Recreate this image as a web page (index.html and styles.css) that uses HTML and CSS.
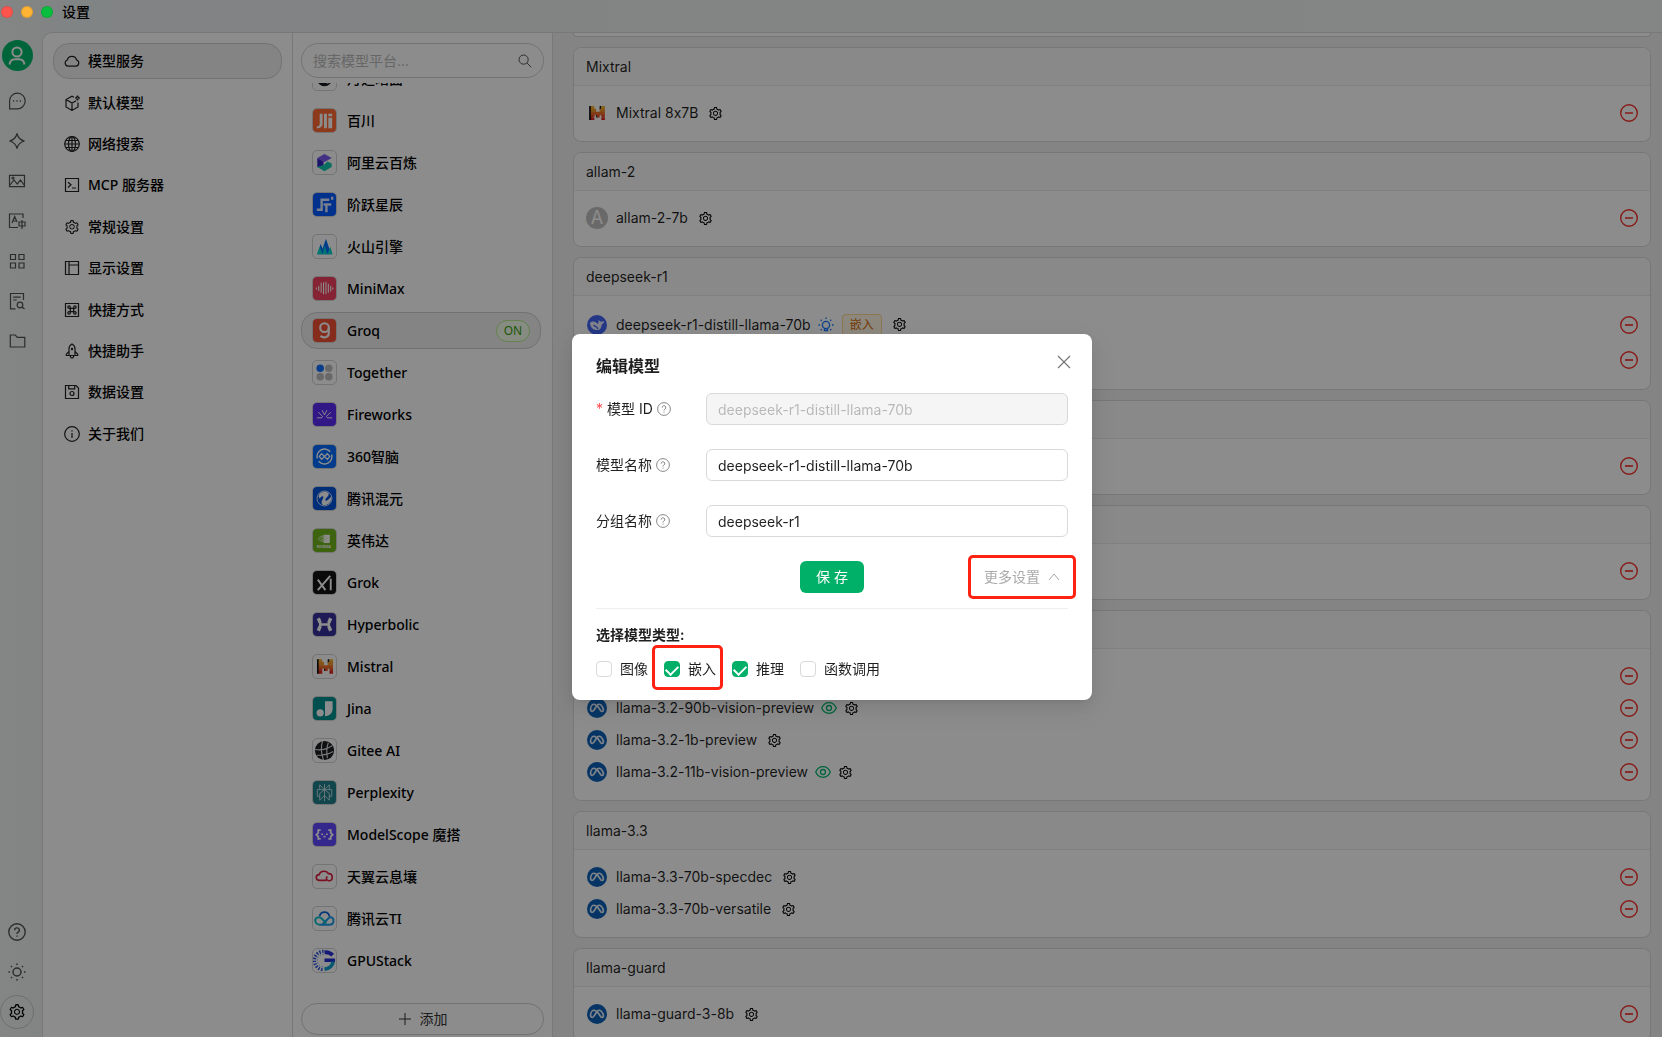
FILE: index.html
```html
<!DOCTYPE html>
<html lang="zh-CN">
<head>
    <meta charset="UTF-8">
    <meta name="viewport" content="width=device-width, initial-scale=1.0">
    <title>设置</title>
    <link rel="stylesheet" href="styles.css">
</head>
<body>
    <svg class="sprite" aria-hidden="true">
        <symbol id="i-gear" viewBox="0 0 1024 1024"><path fill="currentColor" stroke="none" d="M924.8 625.7l-65.5-56c3.1-19 4.7-38.4 4.7-57.8s-1.6-38.8-4.7-57.8l65.5-56a32.03 32.03 0 009.3-35.2l-.9-2.6a443.74 443.74 0 00-79.7-137.9l-1.8-2.1a32.12 32.12 0 00-35.1-9.5l-81.3 28.9c-30-24.6-63.5-44-99.7-57.6l-15.7-85a32.05 32.05 0 00-25.8-25.7l-2.7-.5c-52.1-9.4-106.9-9.4-159 0l-2.7.5a32.05 32.05 0 00-25.8 25.7l-15.8 85.4a351.86 351.86 0 00-99 57.4l-81.9-29.1a32 32 0 00-35.1 9.5l-1.8 2.1a446.02 446.02 0 00-79.7 137.9l-.9 2.6c-4.5 12.5-.8 26.5 9.3 35.2l66.3 56.6c-3.1 18.8-4.6 38-4.6 57.1 0 19.2 1.5 38.4 4.6 57.1L99 625.5a32.03 32.03 0 00-9.3 35.2l.9 2.6c18.1 50.4 44.9 96.9 79.7 137.9l1.8 2.1a32.12 32.12 0 0035.1 9.5l81.9-29.1c29.8 24.5 63.1 43.9 99 57.4l15.8 85.4a32.05 32.05 0 0025.8 25.7l2.7.5a449.4 449.4 0 00159 0l2.7-.5a32.05 32.05 0 0025.8-25.7l15.7-85a350 350 0 0099.7-57.6l81.3 28.9a32 32 0 0035.1-9.5l1.8-2.1c34.8-41.1 61.6-87.5 79.7-137.9l.9-2.6c4.5-12.3.8-26.3-9.3-35zM788.3 465.9c2.5 15.1 3.8 30.6 3.8 46.1s-1.3 31-3.8 46.1l-6.6 40.1 74.7 63.9a370.03 370.03 0 01-42.6 73.6L721 702.8l-31.4 25.8c-23.9 19.6-50.5 35-79.3 45.8l-38.1 14.3-17.9 97a377.5 377.5 0 01-85 0l-17.9-97.2-37.8-14.5c-28.5-10.8-55-26.2-78.7-45.7l-31.4-25.9-93.4 33.2c-17-22.9-31.2-47.6-42.6-73.6l75.5-64.5-6.5-40c-2.4-14.9-3.7-30.3-3.7-45.5 0-15.3 1.2-30.6 3.7-45.5l6.5-40-75.5-64.5c11.3-26.1 25.6-50.7 42.6-73.6l93.4 33.2 31.4-25.9c23.7-19.5 50.2-34.9 78.7-45.7l37.9-14.3 17.9-97.2c28.1-3.2 56.8-3.2 85 0l17.9 97 38.1 14.3c28.7 10.8 55.4 26.2 79.3 45.8l31.4 25.8 92.8-32.9c17 22.9 31.2 47.6 42.6 73.6L781.8 426l6.5 39.9zM512 326c-97.2 0-176 78.8-176 176s78.8 176 176 176 176-78.8 176-176-78.8-176-176-176zm79.2 255.2A111.6 111.6 0 01512 614c-29.9 0-58-11.7-79.2-32.8A111.6 111.6 0 01400 502c0-29.9 11.7-58 32.8-79.2C454 401.6 482.1 390 512 390c29.9 0 58 11.6 79.2 32.8A111.6 111.6 0 01624 502c0 29.9-11.7 58-32.8 79.2z"/></symbol>
        <symbol id="i-minus" viewBox="0 0 18 18"><circle cx="9" cy="9" r="8.3" stroke-width="1.4"/><path d="M5 9h8" stroke-width="1.7"/></symbol>
        <symbol id="i-help" viewBox="0 0 16 16"><circle cx="8" cy="8" r="7.3"/><path d="M5.9 6.5a2.1 2 0 1 1 3.1 1.6c-.7.4-1 .8-1 1.6M8 11v1.2"/></symbol>
        <symbol id="i-eye" viewBox="0 0 16 16"><path d="M.7 8C2.300 4.400 4.800 2.700 8 2.700S13.700 4.400 15.300 8c-1.600 3.600-4.100 5.300-7.300 5.300S2.300 11.600.7 8z"/><circle cx="8" cy="8" r="2.500"/></symbol>
        <symbol id="l-meta" viewBox="0 0 20 20"><circle cx="10" cy="10" r="10" fill="#0b62b9" stroke="none"/><path d="M10 8.200C8.800 6.700 7.600 6 6.500 6.300 4.800 6.800 3.500 9.400 3.600 11.600c.1 1.800 1.800 2.300 3 .9C7.900 11 9 8.600 10.300 7.200c1.300-1.300 3-1.300 4.200.3 1.200 1.500 2 3.400 1.900 4.700-.2 1.700-1.800 1.700-2.900.2C12.500 11 11.300 8.800 10 7.600" stroke="#e6eef8" stroke-width="1.700"/></symbol>
        <symbol id="l-mistral" viewBox="0 0 18 16"><g stroke="none"><path fill="#111" d="M0 0h3v16H0zM12 0h2v4h-2zM8 10h2v3H8z"/><path fill="#f2b02c" d="M2 0h4v4H2zM14 0h4v4h-4z"/><path fill="#f2952b" d="M2 3h6v4H2zM12 3h6v4h-6z"/><path fill="#ee722a" d="M2 6.500h16v4H2z"/><path fill="#e84a28" d="M2 10h4v3H2zM9 10h3v3H9zM14 10h4v3h-4z"/><path fill="#df2622" d="M2 13h4v3H2zM14 13h4v3h-4z"/></g></symbol>
    </svg>

    <header class="titlebar">
        <div class="lights"><i class="red"></i><i class="yellow"></i><i class="green"></i></div>
        <span class="title">设置</span>
    </header>

    <div class="app">
        <nav class="rail">
            <button class="avatar" aria-label="用户"><svg class="icon-20" viewBox="0 0 20 20"><circle cx="10" cy="6" r="4.600"/><path d="M2.500 18.500c.5-3.600 3-5.200 5.500-5.200h4c2.500 0 5 1.600 5.500 5.200"/></svg></button>
            <button class="rail-btn" aria-label="对话"><svg class="icon-18" viewBox="0 0 18 18"><path d="M1.600 16.800V9A7.800 7.800 0 1 1 9 16.800z"/><path d="M5 9h1.200M8.400 9h1.200M11.800 9H13" stroke-width="1.500"/></svg></button>
            <button class="rail-btn" aria-label="助手"><svg class="icon-18" viewBox="0 0 18 18"><path d="M9 1.500c.9 3.900 3.100 6.500 7.500 7.500-4.400 1-6.600 3.600-7.500 7.500C8.100 12.600 5.900 10 1.500 9 5.900 8 8.100 5.400 9 1.500z"/></svg></button>
            <button class="rail-btn" aria-label="绘图"><svg class="icon-18" viewBox="0 0 18 18"><path d="M1.500 3.300h15v11.400h-15zM2 13l4-5 3.200 4 3.300-4L16 12.800"/><circle cx="5" cy="6" r="1"/></svg></button>
            <button class="rail-btn" aria-label="翻译"><svg class="icon-18" viewBox="0 0 18 18"><path d="M15 6V2H1.500v13.500H10M4 11l2.700-6.500L9 10M5 9h3.500M14 8v9M11 10h6v4h-6z"/></svg></button>
            <button class="rail-btn" aria-label="小程序"><svg class="icon-18" viewBox="0 0 18 18"><path d="M2.500 2.500h5v5h-5zM11 2.500h5v5h-5zM2.500 11h5v5h-5zM11 11h5v5h-5z"/></svg></button>
            <button class="rail-btn" aria-label="知识库"><svg class="icon-18" viewBox="0 0 18 18"><path d="M7.500 16.800h-5V1.500h13V8M5.200 5.200h7.500M5.200 8h3.500"/><circle cx="12" cy="13" r="2.800"/><path d="M14 15l2.500 2"/></svg></button>
            <button class="rail-btn" aria-label="文件"><svg class="icon-18" viewBox="0 0 18 18"><path d="M2.300 15V3h5l2 2.300h7.500V15z"/></svg></button>
            <div class="rail-space"></div>
            <button class="rail-btn" aria-label="帮助"><svg class="icon-18"><use href="#i-help"/></svg></button>
            <button class="rail-btn" aria-label="主题"><svg class="icon-18" viewBox="0 0 18 18"><circle cx="9" cy="9" r="4" stroke-width="1.500"/><path d="M9 .5v1.500M9 16v1.500M.5 9H2M16 9h1.500M3 3l1 1M14 14l1 1M3 15l1-1M14 4l1-1" stroke-width="1.500"/></svg></button>
            <button class="rail-btn active" aria-label="设置"><svg class="icon-18"><use href="#i-gear"/></svg></button>
        </nav>

        <div class="content">
            <div class="menu-col">
                <nav class="menu">
                    <a class="menu-item active" href="#"><svg class="icon-16" viewBox="0 0 16 16"><path d="M4 13.200a3.200 3.200 0 0 1-.7-6.200 4.800 4.800 0 0 1 9.300 0A3.200 3.200 0 0 1 12 13.200z"/></svg>模型服务</a>
                    <a class="menu-item" href="#"><svg class="icon-16" viewBox="0 0 16 16"><path d="M14 7.500V12l-6 3.400L2 12V4.500L8 1.200l2 1M2 4.600L8 8l4.200-2.300M8 8v7.200M13.500.5c.2 1.600.7 2.200 2.200 2.500-1.500.3-2 .9-2.200 2.500-.2-1.600-.7-2.200-2.200-2.500 1.500-.3 2-.9 2.200-2.500z"/></svg>默认模型</a>
                    <a class="menu-item" href="#"><svg class="icon-16" viewBox="0 0 16 16"><circle cx="8" cy="8" r="7.300"/><ellipse cx="8" cy="8" rx="3.500" ry="7.300"/><path d="M8 .7v14.600M.7 8h14.600M2 4.500h12M2 11.500h12"/></svg>网络搜索</a>
                    <a class="menu-item" href="#"><svg class="icon-16" viewBox="0 0 16 16"><path d="M1.500 1.500h13v13h-13zM4 5.200l3 2.600-3 2.700M8 11h4"/></svg>MCP 服务器</a>
                    <a class="menu-item" href="#"><svg class="icon-16"><use href="#i-gear"/></svg>常规设置</a>
                    <a class="menu-item" href="#"><svg class="icon-16" viewBox="0 0 16 16"><path d="M1.500 1.500h13v13h-13zM5 1.500v13M5 5h9.500"/></svg>显示设置</a>
                    <a class="menu-item" href="#"><svg class="icon-16" viewBox="0 0 16 16"><path d="M1.500 1.500h13v13h-13zM6.300 6.300h3.400v3.400H6.300zM6.300 6.300V5.200a1.200 1.200 0 1 0-1.100 1.100zM9.700 6.300V5.200a1.200 1.200 0 1 1 1.100 1.100zM6.300 9.700v1.100a1.200 1.200 0 1 1-1.100-1.100zM9.700 9.700v1.100a1.200 1.200 0 1 0 1.100-1.100z"/></svg>快捷方式</a>
                    <a class="menu-item" href="#"><svg class="icon-16" viewBox="0 0 16 16"><path d="M5 12.500V5.500C5 3.500 6.500 1.800 8 1c1.500.8 3 2.500 3 4.500v7zM5 8.500l-2.700 2.700v1.300h11.400v-1.300L11 8.500M6.300 12.500c0 1.500.6 2.500 1.700 2.500s1.700-1 1.700-2.500"/><circle cx="8" cy="6" r=".6"/></svg>快捷助手</a>
                    <a class="menu-item" href="#"><svg class="icon-16" viewBox="0 0 16 16"><path d="M1.500 1.500H12L14.500 4v10.500h-13zM4.700 1.500v3.300h6V1.500"/><circle cx="8" cy="9.500" r="2"/></svg>数据设置</a>
                    <a class="menu-item" href="#"><svg class="icon-16" viewBox="0 0 16 16"><circle cx="8" cy="8" r="7.300"/><path d="M8 7v5M8 4.200v1.300"/></svg>关于我们</a>
                </nav>
            </div>

            <section class="providers">
                <div class="search">
                    <input type="text" placeholder="搜索模型平台..." aria-label="搜索模型平台">
                    <svg class="icon-14" viewBox="0 0 14 14"><circle cx="5.600" cy="5.600" r="4.600"/><path d="M9 9l4.300 4.300"/></svg>
                </div>
                <div class="provider-scroll">
                    <ul class="provider-list">
                        <li class="provider"><svg class="logo" viewBox="0 0 24 24"><circle cx="12" cy="12" r="8" fill="#16191e"/><path d="M5 9l13 5M5 13l11 4M8 6l11 4" stroke="#fff"/></svg>月之暗面</li>
                        <li class="provider"><svg class="logo" viewBox="0 0 24 24"><path fill="#ff6933" d="M0 0h24v24H0z"/><path fill="#fff" d="M7 5h3v10c0 3-2 5-6 5v-2c2 0 3-1 3-3zM11.500 5h3v15h-3zM16 9h4v11h-4zM16 5h4v2.500h-4z"/></svg>百川</li>
                        <li class="provider"><svg class="logo" viewBox="0 0 24 24"><path fill="#7a5bf0" d="M12 3l7.500 4.300L12 11.500 4.500 7.300z"/><path fill="#3423c4" d="M4.500 7.300L11 11v4l-6.500 2z"/><path fill="#12c9b0" d="M4.500 16.700L12 14l3-3 4.500 2v3.700L12 21z"/></svg>阿里云百炼</li>
                        <li class="provider"><svg class="logo" viewBox="0 0 24 24"><path fill="#005aff" d="M0 0h24v24H0z"/><path d="M4 17.500h5V7h8M11 12h8M14 12v8M20 4v3" stroke="#dce8ff" stroke-width="2.500"/></svg>阶跃星辰</li>
                        <li class="provider"><svg class="logo" viewBox="0 0 24 24"><path fill="#006eff" d="M8 20l5.500-16L19 20zM5 20l3-11 4 11z"/><path fill="#00d6cf" d="M4 20l3-8 3 8zM10 20l2-9 3 9zM15 20l3-8 2.500 8z"/></svg>火山引擎</li>
                        <li class="provider"><svg class="logo" viewBox="0 0 24 24"><path fill="#f23f5d" d="M0 0h24v24H0z"/><path d="M3.500 13v-2M6 14.500v-5M8.500 16.500V6M11 18V5.500M13.500 18V5M16 16.500V7M18.500 15V9M20.700 13v-2" stroke="#fff" stroke-width="1.100"/></svg>MiniMax</li>
                        <li class="provider active"><svg class="logo" viewBox="0 0 24 24"><path fill="#f55036" d="M0 0h24v24H0z"/><circle cx="12" cy="9" r="4.500" stroke="#fff" stroke-width="2.200"/><path d="M16.500 9v5.500c0 5-6 6-8.700 3" stroke="#fff" stroke-width="2.200"/></svg>Groq<span class="on">ON</span></li>
                        <li class="provider"><svg class="logo" viewBox="0 0 24 24"><circle cx="7.500" cy="7.500" r="3.900" fill="#0f6fff"/><g fill="#bdbdbd"><circle cx="16.500" cy="7.500" r="3.900"/><circle cx="7.500" cy="16.500" r="3.900"/><circle cx="16.500" cy="16.500" r="3.900"/></g></svg>Together</li>
                        <li class="provider"><svg class="logo" viewBox="0 0 24 24"><path fill="#5b2af5" d="M0 0h24v24H0z"/><path d="M9.500 7.500l2.500 5 2.500-5M5.500 9.500l4.500 4.500M18.500 9.500L14 14M4 15.500h5l1-1.500M20 15.500h-5L14 14" stroke="#fff"/></svg>Fireworks</li>
                        <li class="provider"><svg class="logo" viewBox="0 0 24 24"><path fill="#006cff" d="M0 0h24v24H0z"/><path d="M4.500 14A7.800 7.800 0 0 1 18 7M19.500 10A7.800 7.800 0 0 1 6 17" stroke="#fff" stroke-width="1.600"/><path d="M9 9l6 6M9 15l6-6M6.500 12L9 9l3 3 3-3 2.500 3-2.500 3-3-3-3 3z" stroke="#fff" stroke-width="1.300"/></svg>360智脑</li>
                        <li class="provider"><svg class="logo" viewBox="0 0 24 24"><path fill="#0052d9" d="M0 0h24v24H0z"/><circle cx="12" cy="12" r="7.800" stroke="#d6e4ff"/><path fill="#fff" d="M13 5c-5-1-9 4-6 7 3-4 5-2 3 1-2 3-1 6 2 6 5 0 8-5 7-9-3 3-4 5-6 4-1-3 5-4 3-8z"/></svg>腾讯混元</li>
                        <li class="provider"><svg class="logo" viewBox="0 0 24 24"><path fill="#6fb51b" d="M0 0h24v24H0z"/><path fill="#fff" d="M11 6h6.500v8.500H11z"/><path d="M5.500 10C8 6.500 13 6.500 15 9.500c-2 4-7.500 4.500-9.500.5zM8 10c1.500-2 4-2 5 0-1.500 2-3.500 2-5 0z" stroke="#ddefc6"/><text x="4" y="20" class="nv">NVIDIA</text></svg>英伟达</li>
                        <li class="provider"><svg class="logo" viewBox="0 0 24 24"><path fill="#131313" d="M0 0h24v24H0z"/><path d="M5 9l8 11M5 20L18 5M18.500 8v12" stroke="#fff" stroke-width="2"/></svg>Grok</li>
                        <li class="provider"><svg class="logo" viewBox="0 0 24 24"><path fill="#36309c" d="M0 0h24v24H0z"/><path d="M7.500 9.500v5M16.500 9.500v5M7 12h10" stroke="#fff" stroke-width="2.600"/><path d="M7.500 10L5.500 5.500M16.500 10l2-4.500M7.500 14l-2 4.500M16.500 14l2 4.500" stroke="#fff" stroke-width="3.600"/></svg>Hyperbolic</li>
                        <li class="provider"><svg class="logo" viewBox="0 0 24 24"><use href="#l-mistral" x="4" y="4" width="17" height="16"/></svg>Mistral</li>
                        <li class="provider"><svg class="logo" viewBox="0 0 24 24"><path fill="#009191" d="M0 0h24v24H0z"/><circle cx="7.500" cy="16.500" r="3.800" fill="#fff"/><path fill="#fff" d="M12.500 4.500h8v8c0 4-3.500 7.500-8 7.500z"/></svg>Jina</li>
                        <li class="provider"><svg class="logo" viewBox="0 0 24 24"><circle cx="12" cy="12" r="10" fill="#1c1e21"/><path d="M10 2c-2 6-2 12 1 20M16 4c-2 5-2 10-1 16M2 11c6 1 12 0 18-4M4 17c6 0 12-1 17-4" stroke="#ddd" stroke-width="1.200"/></svg>Gitee AI</li>
                        <li class="provider"><svg class="logo" viewBox="0 0 24 24"><path fill="#20808d" d="M0 0h24v24H0z"/><path d="M12 3v18M7 4l5 5 5-5v5H7zM7 9H4.500v7H7v4l5-5 5 5v-4h2.500V9H17M7 16v-3l5-4 5 4v3" stroke="#cfe6e8" stroke-width=".9"/></svg>Perplexity</li>
                        <li class="provider"><svg class="logo" viewBox="0 0 24 24"><path fill="#624aff" d="M0 0h24v24H0z"/><path d="M8 7.500H5.500v2.700l-2 2 2 2v2.300H8M16 7.500h2.500v2.700l2 2-2 2v2.300H16M9.500 11v1.500M14.500 11v1.500M11 14.200h2" stroke="#fff" stroke-width="1.900"/></svg>ModelScope 魔搭</li>
                        <li class="provider"><svg class="logo" viewBox="0 0 24 24"><path d="M14 16H7c-5 0-4.500-6-.5-6 1-4.500 8-4.500 9.500-1 5-.5 5.500 7 1 7.500-3 0-4-3-2-4.500" stroke="#dc1f3f" stroke-width="1.700"/></svg>天翼云息壤</li>
                        <li class="provider"><svg class="logo" viewBox="0 0 24 24"><path d="M7 9.500C8 4 16 4 17 9.500" stroke="#0a66e0" stroke-width="2"/><path d="M10 18l7.500-7.500c5.500.5 5 8-.5 8H7" stroke="#1e9bea" stroke-width="2"/><path d="M14 17L9 12c-3-3-7.500-.5-6.500 3 .6 2.500 2.500 3.500 5 3.500" stroke="#0bbfd0" stroke-width="2"/></svg>腾讯云TI</li>
                        <li class="provider"><svg class="logo" viewBox="0 0 24 24"><path d="M12 3.500c4-.5 6.500 1 8.500 3" stroke="#2630d8" stroke-width="4"/><path fill="#2230d8" d="M12 10h11v3.500H12z"/><path d="M21 13c-.5 4-4 7.500-9 8" stroke="#0fa0d0" stroke-width="4"/><path d="M11 2.500A9.500 9.500 0 0 0 11 21.500" stroke="#2a50dd" stroke-width="3.500" stroke-dasharray="1.500 1.500"/><path d="M11 5.500a6.500 6.500 0 0 0 0 13" stroke="#3b7be6" stroke-dasharray="1 2"/></svg>GPUStack</li>
                    </ul>
                </div>
                <button class="add"><svg class="icon-14" viewBox="0 0 14 14"><path d="M7 1v12M1 7h12"/></svg>添加</button>
            </section>

            <main class="models">
                <div class="group group-tail"></div>
                <section class="group">
                    <h2>Mixtral</h2>
                    <div class="rows">
                        <div class="row"><span class="pic"><svg class="mistral"><use href="#l-mistral"/></svg></span><span class="name">Mixtral 8x7B</span><button class="gear" aria-label="编辑"><svg><use href="#i-gear"/></svg></button><button class="del" aria-label="删除"><svg><use href="#i-minus"/></svg></button></div>
                    </div>
                </section>
                <section class="group">
                    <h2>allam-2</h2>
                    <div class="rows">
                        <div class="row"><span class="pic letter">A</span><span class="name">allam-2-7b</span><button class="gear" aria-label="编辑"><svg><use href="#i-gear"/></svg></button><button class="del" aria-label="删除"><svg><use href="#i-minus"/></svg></button></div>
                    </div>
                </section>
                <section class="group">
                    <h2>deepseek-r1</h2>
                    <div class="rows">
                        <div class="row tall"><span class="pic"><svg class="icon-20" viewBox="0 0 20 20"><circle cx="10" cy="10" r="10" fill="#4165f5"/><path fill="#e8edff" d="M3 8c1-1.500 4-2 6-.5l2 1.500c.5-1.500 1-3 .5-4 1 .5 1.500 1 2 1.500 1 .5 2 0 3.500-.5-.2 2-1 3-2.300 3.500-.2 2.500-1 4.500-2.700 5.500H9c-3.500-.5-6-3.500-6-7z"/><path d="M6.500 10.500c1 0 3.500 1.500 4.500 3.500" stroke="#4165f5" stroke-width="1.500"/></svg></span><span class="name">deepseek-r1-distill-llama-70b</span><svg class="cap sun" viewBox="0 0 16 16"><circle cx="8" cy="8" r="3.600"/><path d="M6.500 11.500v2h3v-2M8 .5V2M.5 8H2M14 8h1.500M2.700 2.700l1.100 1.100M12.200 3.800l1.100-1.100M2.700 13.300l1.100-1.100M12.200 12.200l1.100 1.100"/></svg><span class="tag">嵌入</span><button class="gear" aria-label="编辑"><svg><use href="#i-gear"/></svg></button><button class="del" aria-label="删除"><svg><use href="#i-minus"/></svg></button></div>
                        <div class="row tall"><button class="del" aria-label="删除"><svg><use href="#i-minus"/></svg></button></div>
                    </div>
                </section>
                <section class="group">
                    <h2></h2>
                    <div class="rows">
                        <div class="row"><button class="del" aria-label="删除"><svg><use href="#i-minus"/></svg></button></div>
                    </div>
                </section>
                <section class="group">
                    <h2></h2>
                    <div class="rows">
                        <div class="row"><button class="del" aria-label="删除"><svg><use href="#i-minus"/></svg></button></div>
                    </div>
                </section>
                <section class="group">
                    <h2></h2>
                    <div class="rows">
                        <div class="row"><button class="del" aria-label="删除"><svg><use href="#i-minus"/></svg></button></div>
                        <div class="row"><span class="pic"><svg class="icon-20"><use href="#l-meta"/></svg></span><span class="name">llama-3.2-90b-vision-preview</span><svg class="cap vision"><use href="#i-eye"/></svg><button class="gear" aria-label="编辑"><svg><use href="#i-gear"/></svg></button><button class="del" aria-label="删除"><svg><use href="#i-minus"/></svg></button></div>
                        <div class="row"><span class="pic"><svg class="icon-20"><use href="#l-meta"/></svg></span><span class="name">llama-3.2-1b-preview</span><button class="gear" aria-label="编辑"><svg><use href="#i-gear"/></svg></button><button class="del" aria-label="删除"><svg><use href="#i-minus"/></svg></button></div>
                        <div class="row"><span class="pic"><svg class="icon-20"><use href="#l-meta"/></svg></span><span class="name">llama-3.2-11b-vision-preview</span><svg class="cap vision"><use href="#i-eye"/></svg><button class="gear" aria-label="编辑"><svg><use href="#i-gear"/></svg></button><button class="del" aria-label="删除"><svg><use href="#i-minus"/></svg></button></div>
                    </div>
                </section>
                <section class="group">
                    <h2>llama-3.3</h2>
                    <div class="rows">
                        <div class="row"><span class="pic"><svg class="icon-20"><use href="#l-meta"/></svg></span><span class="name">llama-3.3-70b-specdec</span><button class="gear" aria-label="编辑"><svg><use href="#i-gear"/></svg></button><button class="del" aria-label="删除"><svg><use href="#i-minus"/></svg></button></div>
                        <div class="row"><span class="pic"><svg class="icon-20"><use href="#l-meta"/></svg></span><span class="name">llama-3.3-70b-versatile</span><button class="gear" aria-label="编辑"><svg><use href="#i-gear"/></svg></button><button class="del" aria-label="删除"><svg><use href="#i-minus"/></svg></button></div>
                    </div>
                </section>
                <section class="group">
                    <h2>llama-guard</h2>
                    <div class="rows">
                        <div class="row"><span class="pic"><svg class="icon-20"><use href="#l-meta"/></svg></span><span class="name">llama-guard-3-8b</span><button class="gear" aria-label="编辑"><svg><use href="#i-gear"/></svg></button><button class="del" aria-label="删除"><svg><use href="#i-minus"/></svg></button></div>
                    </div>
                </section>
            </main>
        </div>
    </div>

    <div class="mask">
        <form class="dialog" role="dialog" aria-labelledby="dialog-title">
            <div class="dialog-head">
                <h1 id="dialog-title">编辑模型</h1>
                <button type="button" class="close" aria-label="关闭"><svg class="icon-14" viewBox="0 0 14 14"><path d="M1 1l12 12M13 1L1 13"/></svg></button>
            </div>
            <div class="field">
                <label for="model-id"><span class="required">*</span>模型 ID<svg class="icon-14"><use href="#i-help"/></svg></label>
                <input id="model-id" type="text" value="deepseek-r1-distill-llama-70b" disabled>
            </div>
            <div class="field">
                <label for="model-name">模型名称<svg class="icon-14"><use href="#i-help"/></svg></label>
                <input id="model-name" type="text" value="deepseek-r1-distill-llama-70b">
            </div>
            <div class="field">
                <label for="model-group">分组名称<svg class="icon-14"><use href="#i-help"/></svg></label>
                <input id="model-group" type="text" value="deepseek-r1">
            </div>
            <div class="actions">
                <button type="button" class="save">保 存</button>
                <button type="button" class="more">更多设置<svg viewBox="0 0 12 12"><path d="M1 9l5-6 5 6"/></svg></button>
            </div>
            <h3>选择模型类型:</h3>
            <div class="types">
                <label><input type="checkbox"><span>图像</span></label>
                <label class="marked"><input type="checkbox" checked><span>嵌入</span></label>
                <label><input type="checkbox" checked><span>推理</span></label>
                <label><input type="checkbox"><span>函数调用</span></label>
            </div>
        </form>
    </div>
</body>
</html>
```
FILE: styles.css
```css
* {
    box-sizing: border-box;
}
body {
    margin: 0;
    height: 100vh;
    display: flex;
    flex-direction: column;
    overflow: hidden;
    background: linear-gradient(90deg, #eff4f2, #ecf0f1 60px, #f0f3f2);
    font-family: Inter, "Noto Sans CJK SC", sans-serif;
    font-size: 14px;
    line-height: 22px;
    font-variant-ligatures: no-contextual;
    color: rgba(0, 0, 0, 0.88);
}
button {
    padding: 0;
    border: none;
    background: none;
    font: inherit;
    color: inherit;
    display: flex;
    align-items: center;
    justify-content: center;
}
input {
    font: inherit;
    color: inherit;
}
svg {
    flex-shrink: 0;
    fill: none;
    stroke: currentColor;
}
.sprite {
    position: absolute;
    width: 0;
    height: 0;
}
.icon-14 {
    width: 14px;
    height: 14px;
}
.icon-16 {
    width: 16px;
    height: 16px;
}
.icon-18 {
    width: 18px;
    height: 18px;
}
.icon-20 {
    width: 20px;
    height: 20px;
}

/* title bar */
.titlebar {
    height: 32px;
    padding-bottom: 8px;
    display: flex;
    align-items: center;
    flex-shrink: 0;
}
.lights {
    position: relative;
    z-index: 20;
    display: flex;
    gap: 8px;
    padding-left: 1px;
    margin-right: 9px;
}
.lights i {
    width: 12px;
    height: 12px;
    border-radius: 50%;
    border: 1px solid rgba(0, 0, 0, 0.1);
}
.red {
    background: #ff544d;
}
.yellow {
    background: #ffb433;
}
.green {
    background: #09be3e;
}
.title {
    font-weight: 500;
    color: #000;
}

/* left icon rail */
.app {
    flex: 1;
    min-height: 0;
    display: flex;
}
.rail {
    width: 42px;
    padding: 8px 8px 8px 0;
    display: flex;
    flex-direction: column;
    align-items: center;
    gap: 6px;
    color: #505050;
}
.avatar {
    width: 31px;
    height: 31px;
    margin-bottom: 7px;
    border-radius: 50%;
    background: #00b96b;
    color: #fff;
    flex-shrink: 0;
}
.avatar svg {
    stroke-width: 2;
}
.rail-btn {
    width: 34px;
    height: 34px;
    flex-shrink: 0;
}
.rail-btn svg {
    stroke-width: 1.2;
}
.rail-btn.active {
    border: 1px solid #c8c8c8;
    border-radius: 50%;
    color: #000;
}
.rail-space {
    flex: 1;
}
.content {
    flex: 1;
    min-width: 0;
    display: flex;
    border: 1px solid #dadada;
    border-right: none;
    border-bottom: none;
    border-top-left-radius: 10px;
    background: #f0f0f0;
    overflow: hidden;
}

/* settings menu */
.menu-col {
    width: 249px;
    padding: 10px;
    flex-shrink: 0;
    background: #fff;
}
.menu {
    height: 409px;
    display: grid;
    grid-template-rows: repeat(10, 1fr);
    gap: 5px;
    font-family: "Noto Sans", "Noto Sans CJK SC", sans-serif;
    font-weight: 500;
}
.menu-item {
    display: flex;
    align-items: center;
    gap: 8px;
    padding: 0 10px;
    border: 1px solid transparent;
    border-radius: 16px;
    color: #000;
    text-decoration: none;
}
.menu-item svg {
    color: #222;
    stroke-width: 1.2;
}
.menu-item.active {
    background: #f1f1f1;
    border-color: #cfcfcf;
}

/* provider list */
.providers {
    width: 261px;
    padding: 10px 8px 2px;
    display: flex;
    flex-direction: column;
    flex-shrink: 0;
    background: #fff;
    border-left: 1px solid #dadada;
    border-right: 1px solid #dadada;
}
.search {
    height: 35px;
    padding: 0 11px;
    display: flex;
    align-items: center;
    flex-shrink: 0;
    border: 1px solid #d0d0d0;
    border-radius: 18px;
    color: #555;
}
.search input {
    flex: 1;
    min-width: 0;
    padding: 0;
    border: none;
    background: none;
    outline: none;
}
.search input::placeholder {
    color: #bbb;
}
.provider-scroll {
    flex: 1;
    min-height: 0;
    margin-top: 5px;
    overflow: hidden;
}
.provider-list {
    margin: -23px 3px 0 0;
    padding: 0;
    list-style: none;
    display: flex;
    flex-direction: column;
    gap: 5px;
    font-family: "Noto Sans", "Noto Sans CJK SC", sans-serif;
    font-weight: 500;
    color: #000;
}
.provider {
    height: 37px;
    padding: 0 10px;
    display: flex;
    align-items: center;
    gap: 10px;
    border: 1px solid transparent;
    border-radius: 16px;
}
.provider.active {
    background: #f1f1f1;
    border-color: #cfcfcf;
}
.logo {
    width: 25px;
    height: 25px;
    border: 1px solid #d3d3d3;
    border-radius: 5px;
    stroke: none;
}
.nv {
    font-size: 4px;
    font-weight: 700;
    fill: #fff;
}
.on {
    margin-left: auto;
    width: 34px;
    height: 22px;
    border: 1px solid #b7eb8f;
    border-radius: 11px;
    background: #f6ffed;
    color: #389e0d;
    font-size: 12px;
    font-weight: 400;
    line-height: 20px;
    text-align: center;
}
.add {
    height: 32px;
    gap: 8px;
    flex-shrink: 0;
    border: 1px solid #cfcfcf;
    border-radius: 16px;
    color: #333;
}

/* model groups */
.models {
    flex: 1;
    min-width: 0;
    padding: 0 11px 0 20px;
    display: flex;
    flex-direction: column;
    gap: 10px;
    overflow: hidden;
}
.group {
    flex-shrink: 0;
    border: 1px solid #d9d9d9;
    border-radius: 8px;
    background: #fff;
}
.group-tail {
    height: 4px;
    border-top: none;
    border-radius: 0 0 8px 8px;
}
.group h2 {
    margin: 0;
    height: 38px;
    padding: 0 12px;
    border-bottom: 1px solid #eaeaea;
    border-radius: 8px 8px 0 0;
    background: #fafafa;
    font-size: 14px;
    font-weight: 400;
    line-height: 38px;
}
.rows {
    padding: 15px 12px 16px;
    display: flex;
    flex-direction: column;
    gap: 8px;
}
.row {
    height: 24px;
    display: flex;
    align-items: center;
}
.row.tall {
    height: 27px;
}
.pic {
    width: 22px;
    height: 22px;
    margin-right: 8px;
    display: flex;
    align-items: center;
    justify-content: center;
    stroke: none;
}
.pic svg {
    stroke: none;
}
.mistral {
    width: 16px;
    height: 14px;
}
.letter {
    border-radius: 50%;
    background: #bfbfbf;
    color: #fff;
    font-size: 18px;
}
.gear {
    margin-left: 10px;
    color: #000;
}
.gear svg {
    width: 15px;
    height: 15px;
}
.cap {
    width: 16px;
    height: 16px;
    margin-left: 7px;
    stroke-width: 1.3;
}
.cap + .gear {
    margin-left: 7px;
}
.sun {
    color: #1677ff;
}
.vision {
    color: #00b96b;
}
.tag {
    height: 22px;
    margin-left: 8px;
    padding: 0 7px;
    border: 1px solid #ffd591;
    border-radius: 4px;
    background: #fff7e6;
    color: #d46b08;
    font-size: 12px;
    line-height: 20px;
}
.del {
    margin-left: auto;
    color: #f5322d;
}
.del svg {
    width: 18px;
    height: 18px;
}

/* dialog */
.mask {
    position: fixed;
    inset: 0;
    z-index: 10;
    display: flex;
    align-items: center;
    justify-content: center;
    padding: 0 0 3px 2px;
    background: rgba(0, 0, 0, 0.45);
}
.dialog {
    width: 520px;
    max-width: 100%;
    padding: 20px 24px;
    border-radius: 8px;
    background: #fff;
    box-shadow: 0 6px 16px 0 rgba(0, 0, 0, 0.08), 0 3px 6px -4px rgba(0, 0, 0, 0.12), 0 9px 28px 8px rgba(0, 0, 0, 0.05);
}
.dialog-head {
    display: flex;
    justify-content: space-between;
    margin-bottom: 15px;
}
.dialog-head h1 {
    margin: 0;
    font-size: 16px;
    font-weight: 600;
    line-height: 24px;
}
.close {
    width: 22px;
    height: 16px;
    margin-right: -7px;
    color: #777;
}
.close svg {
    stroke-width: 1.2;
}
.field {
    display: flex;
    align-items: center;
    margin-bottom: 24px;
}
.field label {
    width: 110px;
    display: flex;
    align-items: center;
}
.field label svg {
    margin-left: 4px;
    color: #777;
}
.required {
    width: 11px;
    color: #ff4d4f;
}
.field input {
    flex: 1;
    min-width: 0;
    height: 32px;
    padding: 0 11px;
    border: 1px solid #d9d9d9;
    border-radius: 6px;
    background: #fff;
}
.field input:disabled {
    background: #f5f5f5;
    color: rgba(0, 0, 0, 0.25);
}
.actions {
    display: grid;
    grid-template-columns: 1fr 64px 1fr;
    padding-bottom: 15px;
    border-bottom: 1px solid #eee;
}
.save {
    grid-column: 2;
    height: 32px;
    border-radius: 6px;
    background: #00b068;
    color: #fff;
}
.more {
    position: relative;
    justify-self: end;
    height: 32px;
    padding: 0 8px;
    gap: 8px;
    color: #aaa;
}
.more svg {
    width: 12px;
    height: 12px;
}
.more::after,
.marked::after {
    content: "";
    position: absolute;
    border: 3px solid #ff2112;
    border-radius: 5px;
}
.more::after {
    inset: -6px -8px;
}
.dialog h3 {
    margin: 15px 0 12px;
    font-size: 14px;
    font-weight: 600;
    line-height: 22px;
}
.types {
    display: flex;
    gap: 8px;
}
.types label {
    position: relative;
    display: flex;
    align-items: center;
}
.types span {
    padding: 0 8px;
}
.types input {
    appearance: none;
    width: 16px;
    height: 16px;
    margin: 0;
    display: flex;
    justify-content: center;
    border: 1px solid #d9d9d9;
    border-radius: 4px;
}
.types input:checked {
    border-color: #00b068;
    background: #00b068;
}
.types input:checked::after {
    content: "";
    width: 6px;
    height: 10px;
    margin-top: 1px;
    border: solid #fff;
    border-width: 0 2px 2px 0;
    transform: rotate(45deg);
}
.marked::after {
    inset: -13px 1px -10px -12px;
}
```
